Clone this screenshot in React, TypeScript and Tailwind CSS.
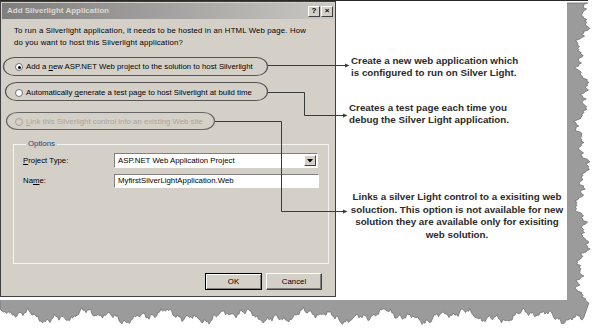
import React from "react";

function noise(t: number) {
  return (
    3.2 * Math.sin(t * 0.085) +
    2.4 * Math.sin(t * 0.23 + 1.3) +
    1.4 * Math.sin(t * 0.71 + 0.4) +
    0.9 * Math.sin(t * 2.3 + 0.7) +
    0.6 * Math.sin(t * 5.1) +
    0.4 * Math.sin(t * 9.7 + 2)
  );
}

function shadowPoints() {
  const pts: string[] = [];
  pts.push("540,3");
  for (let y = 3; y <= 304; y += 1.5) pts.push(`${(582 + noise(y) * 1.2).toFixed(1)},${y}`);
  for (let x = 584; x >= 0; x -= 1.5) pts.push(`${x},${(316 + noise(x + 40) * 1.2).toFixed(1)}`);
  pts.push("0,290");
  pts.push("540,290");
  return pts.join(" ");
}

function Radio({ checked, disabled }: { checked?: boolean; disabled?: boolean }) {
  return (
    <span
      className={`flex h-[8px] w-[8px] items-center justify-center rounded-full border ${
        disabled ? "border-[#a8a49c] bg-[#d4d0c8]" : "border-[#707070] bg-white"
      }`}
    >
      {checked && <span className="h-[3px] w-[3px] rounded-full bg-black" />}
    </span>
  );
}

function Dialog() {
  return (
    <div
      className="flex h-[296px] w-[336px] shrink-0 flex-col border border-[#404040] bg-[#d4d0c8] p-[1px] text-[7.8px] leading-[12px] text-black"
      style={{ fontFamily: '"Liberation Sans", Arial, sans-serif' }}
    >
      <div className="flex h-[16px] items-center justify-between bg-gradient-to-r from-[#7e7e7e] to-[#cac8c4] pl-[5px] pr-[1px]">
        <span className="text-[8px] font-bold text-[#dcd9d2]">Add Silverlight Application</span>
        <div className="flex gap-[1px]">
          <span className="flex h-[11px] w-[12px] items-center justify-center border border-t-white border-l-white border-r-[#404040] border-b-[#404040] bg-[#d4d0c8] text-[8px] font-bold leading-none">
            ?
          </span>
          <span className="flex h-[11px] w-[12px] items-center justify-center border border-t-white border-l-white border-r-[#404040] border-b-[#404040] bg-[#d4d0c8] text-[8px] font-bold leading-none">
            ×
          </span>
        </div>
      </div>
      <div className="flex flex-1 flex-col px-[11px]">
        <p className="mt-[6px] pl-[1px] tracking-[0.15px]">
          To run a Silverlight application, it needs to be hosted in an HTML Web page. How
          <br />
          do you want to host this Silverlight application?
        </p>
        <div className="mt-[12px] flex h-[12px] items-center gap-[3px] pl-[2px]">
          <Radio checked />
          <span>
            Add a <span className="underline">n</span>ew ASP.NET Web project to the solution to host Silverlight
          </span>
        </div>
        <div className="mt-[14px] flex h-[12px] items-center gap-[3px] pl-[2px]">
          <Radio />
          <span>
            Automatically <span className="underline">g</span>enerate a test page to host Silverlight at build time
          </span>
        </div>
        <div className="mt-[17px] flex h-[12px] items-center gap-[3px] pl-[2px]">
          <Radio disabled />
          <span className="text-[#a8a49c]">
            <span className="underline">L</span>ink this Silverlight control into an existing Web site
          </span>
        </div>
        <fieldset className="mt-[10px] h-[126px] border border-[#f4f3ef] px-[9px] pt-[3px]">
          <legend className="ml-[3px] px-[2px] leading-[12px] text-[#1f3f86]">Options</legend>
          <div className="flex h-[15px] items-center">
            <span className="w-[91px]">
              <span className="underline">P</span>roject Type:
            </span>
            <div className="flex h-[15px] w-[204px] items-center justify-between border border-t-[#808080] border-l-[#808080] border-r-white border-b-white bg-white pl-[3px] pr-[1px]">
              <span>ASP.NET Web Application Project</span>
              <span className="flex h-[11px] w-[12px] items-center justify-center border border-t-white border-l-white border-r-[#404040] border-b-[#404040] bg-[#d4d0c8]">
                <svg width="6" height="4" viewBox="0 0 6 4">
                  <polygon points="0,0 6,0 3,3.5" fill="#000" />
                </svg>
              </span>
            </div>
          </div>
          <div className="mt-[6px] flex h-[14px] items-center">
            <span className="w-[91px]">
              Na<span className="underline">m</span>e:
            </span>
            <div className="flex h-[14px] w-[205px] items-center border border-t-[#808080] border-l-[#808080] border-r-white border-b-white bg-white pl-[3px]">
              MyfirstSilverLightApplication.Web
            </div>
          </div>
        </fieldset>
        <div className="mt-[9px] flex justify-end gap-[4px] pr-[1px]">
          <button className="flex h-[17px] w-[57px] items-center justify-center border border-black bg-[#d4d0c8] shadow-[inset_1px_1px_0_#ffffff,inset_-1px_-1px_0_#808080]">
            OK
          </button>
          <button className="flex h-[17px] w-[56px] items-center justify-center border border-t-white border-l-white border-r-[#404040] border-b-[#404040] bg-[#d4d0c8] shadow-[inset_-1px_-1px_0_#808080]">
            Cancel
          </button>
        </div>
      </div>
    </div>
  );
}

function Annotations() {
  const stroke = "#3a3a3a";
  return (
    <svg className="pointer-events-none absolute left-0 top-0" width="600" height="333" viewBox="0 0 600 333">
      <rect x="3.5" y="57.5" width="264" height="18" rx="11" ry="9" fill="none" stroke="#555" strokeWidth="1.2" />
      <rect x="5.5" y="82.5" width="262" height="18" rx="11" ry="9" fill="none" stroke="#555" strokeWidth="1.2" />
      <rect x="6.5" y="112.5" width="208" height="17" rx="11" ry="8.5" fill="none" stroke="#666" strokeWidth="1.2" />
      <path d="M268 65.5 H346" fill="none" stroke={stroke} strokeWidth="1" />
      <polygon points="345,63.5 349.5,65.5 345,67.5" fill={stroke} />
      <path d="M268 92.5 H304.5 V115.5 H344" fill="none" stroke={stroke} strokeWidth="1" />
      <polygon points="343,113.5 347.5,115.5 343,117.5" fill={stroke} />
      <path d="M215 121.5 H281.5 V211.5 H344" fill="none" stroke={stroke} strokeWidth="1" />
      <polygon points="343,209.5 347.5,211.5 343,213.5" fill={stroke} />
    </svg>
  );
}

export default function App() {
  return (
    <div className="relative h-[333px] w-[600px] overflow-hidden bg-white">
      <svg className="absolute left-0 top-0" width="600" height="333" viewBox="0 0 600 333">
        <polygon points={shadowPoints()} fill="#9b9b9b" stroke="#6e6e6e" strokeWidth="0.8" />
        <line x1="0" y1="0.5" x2="588" y2="0.5" stroke="#2a2a2a" strokeWidth="1" />
      </svg>
      <div className="relative flex h-[300px] w-[567px] border-t border-[#2a2a2a] bg-white">
        <Dialog />
        <div
          className="flex flex-1 flex-col text-[9.8px] font-bold leading-[12px] text-[#2b2b2b]"
          style={{ fontFamily: '"Liberation Sans", Arial, sans-serif' }}
        >
          <p className="mt-[54px] pl-[15px]">
            Create a new web application which
            <br />
            is configured to run on Silver Light.
          </p>
          <p className="mt-[23px] pl-[13px]">
            Creates a test page each time you
            <br />
            debug the Silver Light application.
          </p>
          <p className="mt-[65px] pl-[11px] text-center leading-[12.7px]">
            Links a silver Light control to a exisiting web
            <br />
            soluction. This option is not available for new
            <br />
            solution they are available only for exisiting
            <br />
            web solution.
          </p>
        </div>
      </div>
      <Annotations />
    </div>
  );
}
